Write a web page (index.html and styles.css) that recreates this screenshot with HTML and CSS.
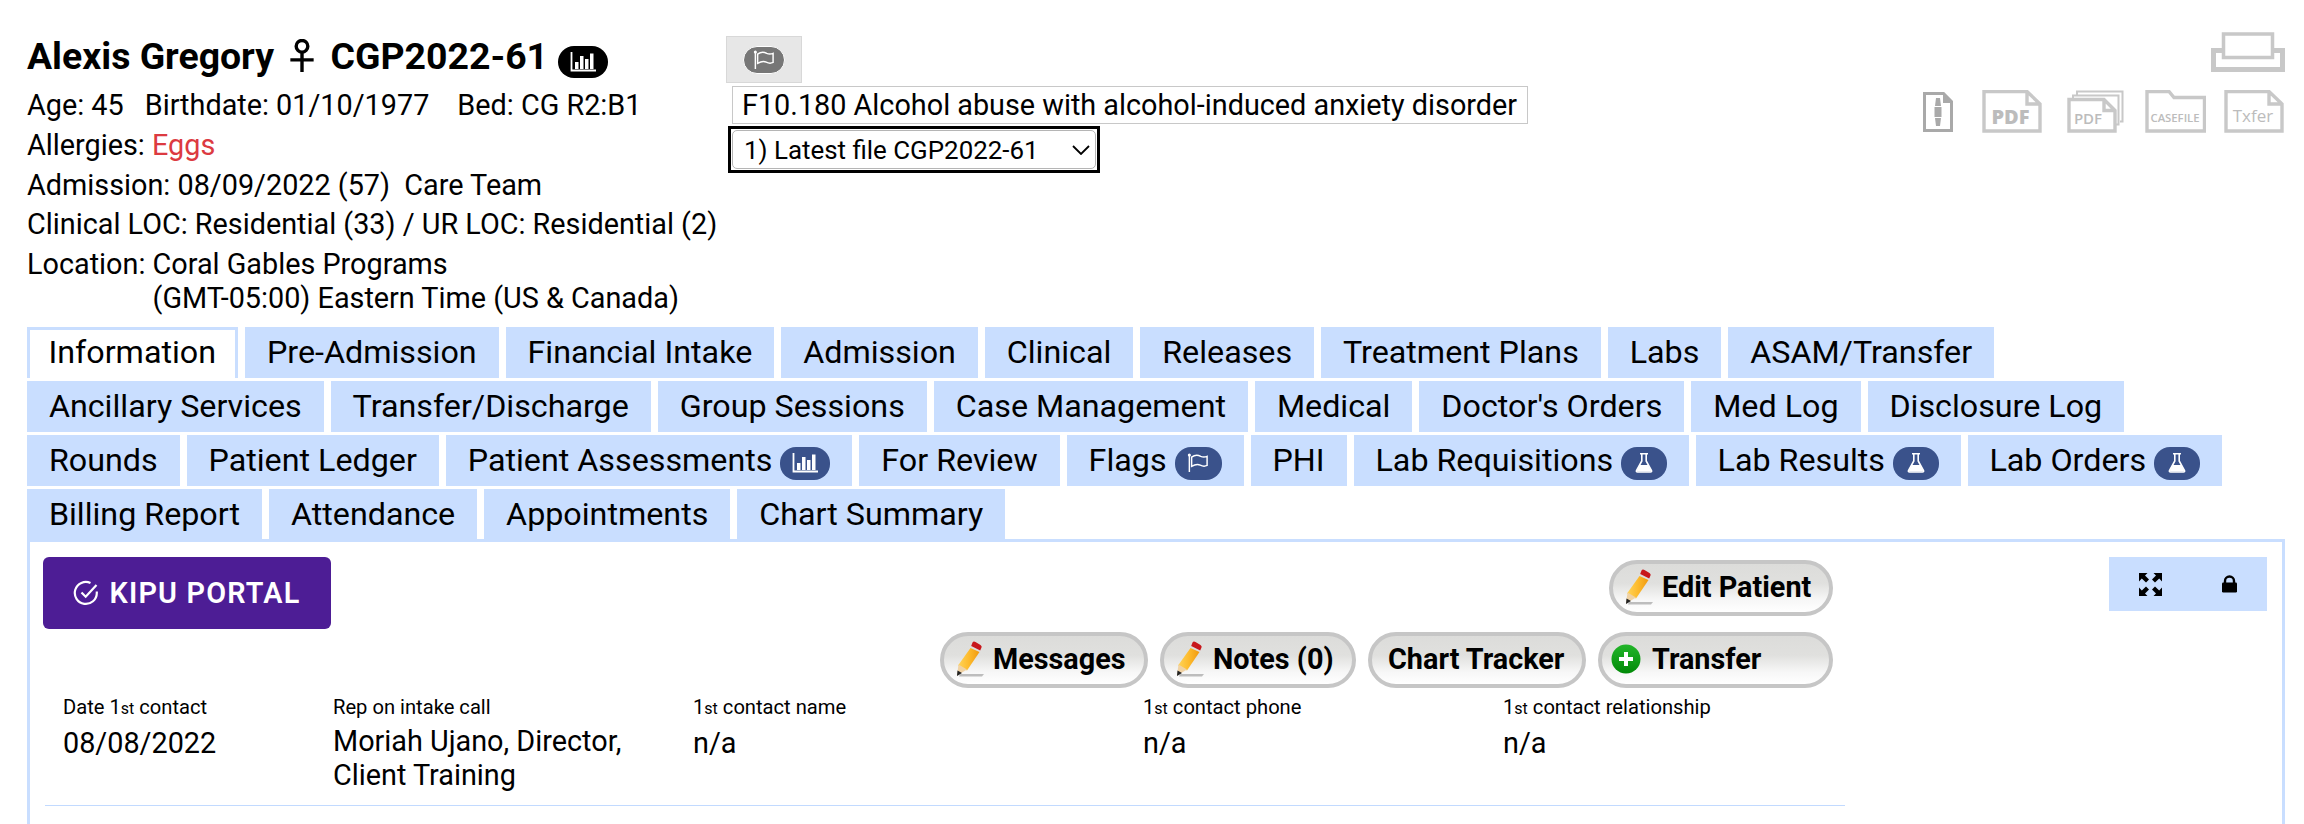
FILE: index.html
```html
<!DOCTYPE html>
<html lang="en">
<head>
<meta charset="utf-8">
<title>Patient chart</title>
<link rel="stylesheet" href="styles.css">
</head>
<body>
<svg class="defs" width="0" height="0">
  <defs>
    <symbol id="bars" viewBox="0 0 26 20"><path d="M1.500 0v18.500H26" fill="none" stroke="currentColor" stroke-width="1.800"/><path d="M5 10h3.500v7H5zM10 4h3.500v13H10zM15 7h3.500v10H15zM20 1.500h3.500v15.500H20z" fill="currentColor"/></symbol>
    <symbol id="flag" viewBox="0 0 24 22"><path d="M2.500 2v19M5 4.500c4-3 7-2.500 10-.8 2.500 1.200 4.500 1 7 0v10c-3 1.500-5 1-7.500-.3-3-1.400-5.500-1-9.500 1.200z" fill="none" stroke="currentColor" stroke-width="1.600"/><circle cx="2.500" cy="2.200" r="1.700" fill="currentColor"/></symbol>
    <symbol id="flask" viewBox="0 0 18 20"><path d="M5 .8h8M6.800 1v7L1.500 17.500q-.5 1.500 1 1.500h13q1.500 0 1-1.500L11.200 8V1" fill="none" stroke="currentColor" stroke-width="1.600"/><path d="M4.800 12h8.400l3.300 6.500h-15z" fill="currentColor"/></symbol>
    <linearGradient id="wood" x1="0" x2="1"><stop offset="0" stop-color="#ffd45a"/><stop offset=".5" stop-color="#fdbb2d"/><stop offset="1" stop-color="#f09a10"/></linearGradient>
    <linearGradient id="green" x2="0" y2="1"><stop offset="0" stop-color="#22b52a"/><stop offset="1" stop-color="#028a08"/></linearGradient>
    <symbol id="pencil" viewBox="0 0 30 36"><path d="M5 33h24l-2 2.500H4z" fill="#bdbdbd"/><path d="M15.500 7l9 4L12 29.500l-9-5z" fill="url(#wood)"/><path d="M3.500 23.500l8.500 5L2 34.500z" fill="#f0d2a4"/><path d="M2.500 29.500l4.500 2.500-5 3z" fill="#222"/><path d="M16 6l8.500 4.500 1-2L17 4z" fill="#ddd"/><path d="M17.500 1.500q1-1.500 3-.5l5 3q1.700 1 1 2.500l-1.300 3-9-4.500z" fill="#c8171c"/></symbol>
  </defs>
</svg>
<header class="head">
  <div class="patient">
    <h1 class="name">Alexis Gregory <svg class="female" viewBox="0 0 24 34"><circle cx="12" cy="7.500" r="6" /><path d="M12 13.500V34M0 21.500h24"/></svg> CGP2022-61 <span class="pill dark"><svg class="i-bars"><use href="#bars"/></svg></span></h1>
    <p class="line"><span>Age: 45</span><span class="birth">Birthdate: 01/10/1977</span><span class="bed">Bed: CG R2:B1</span></p>
    <p class="line">Allergies: <span class="red">Eggs</span></p>
    <p class="line">Admission: 08/09/2022 (57)&nbsp; Care Team</p>
    <p class="line">Clinical LOC: Residential (33) / UR LOC: Residential (2)</p>
    <p class="line loc"><span>Location:&nbsp;</span><span>Coral Gables Programs<br>(GMT-05:00) Eastern Time (US &amp; Canada)</span></p>
  </div>
  <div class="summary">
    <div class="flagbox"><span class="pill grey"><svg class="i-flag"><use href="#flag"/></svg></span></div>
    <div class="diagnosis">F10.180 Alcohol abuse with alcohol-induced anxiety disorder</div>
    <div class="picker"><div class="picker-in"><span>1) Latest file CGP2022-61</span><svg class="chev" viewBox="0 0 18 10"><path d="M1 1l8 8 8-8"/></svg></div></div>
  </div>
  <div class="tools">
    <svg class="printer" viewBox="0 0 74 40"><path d="M0 16h11v5H5v14h64V21h-6v-5h11v24H0z" fill="#c8c8c8"/><path d="M12.500 2h49v23.500h-49z" fill="#fff" stroke="#c8c8c8" stroke-width="3.500"/></svg>
    <div class="files">
      <svg width="30" height="40" viewBox="0 0 30 40"><path d="M1.500 1.500h19l8 8v29h-27z" fill="none" stroke="#a9a9a9" stroke-width="3"/><path d="M20 1v10h9z" fill="#a9a9a9"/><path d="M13 6h4l1 8h-6zM11.500 15h7v10h-7zM12 26h6l-1 8h-4z" fill="#a9a9a9"/></svg>
      <svg width="60" height="43" viewBox="0 0 60 43"><path d="M2 1.500h43L58 14v27H2zM45 2v12h12" class="doc"/><text x="28.500" y="34" class="t-pdf">PDF</text></svg>
      <svg width="57" height="43" viewBox="0 0 57 43"><path d="M10 5V1.500h45.500v30H53M6 9V5.500h45.500v29H49" class="doc thin"/><path d="M2 9.500h35l11 11v20.500H2zM37 10v10.500h10" class="doc"/><text x="21" y="34" class="t-small">PDF</text></svg>
      <svg width="61" height="43" viewBox="0 0 61 43"><path d="M2 1.500h22l5 6h30.500V41H2z" class="doc"/><text x="30" y="32" class="t-case">CASEFILE</text></svg>
      <svg width="60" height="43" viewBox="0 0 60 43"><path d="M2 1.500h43L58 14v27H2zM45 2v12h12" class="doc"/><text x="29" y="32" class="t-tx">Txfer</text></svg>
    </div>
  </div>
</header>
<nav class="tabs">
  <div class="row"><a class="tab on">Information</a><a class="tab">Pre-Admission</a><a class="tab">Financial Intake</a><a class="tab">Admission</a><a class="tab">Clinical</a><a class="tab">Releases</a><a class="tab">Treatment Plans</a><a class="tab">Labs</a><a class="tab">ASAM/Transfer</a></div>
  <div class="row"><a class="tab">Ancillary Services</a><a class="tab">Transfer/Discharge</a><a class="tab">Group Sessions</a><a class="tab">Case Management</a><a class="tab">Medical</a><a class="tab">Doctor's Orders</a><a class="tab">Med Log</a><a class="tab">Disclosure Log</a></div>
  <div class="row"><a class="tab">Rounds</a><a class="tab">Patient Ledger</a><a class="tab">Patient Assessments <span class="pill blue w50"><svg class="i-bars"><use href="#bars"/></svg></span></a><a class="tab">For Review</a><a class="tab">Flags <span class="pill blue w47"><svg class="i-flag"><use href="#flag"/></svg></span></a><a class="tab">PHI</a><a class="tab">Lab Requisitions <span class="pill blue w45"><svg class="i-flask"><use href="#flask"/></svg></span></a><a class="tab">Lab Results <span class="pill blue w45"><svg class="i-flask"><use href="#flask"/></svg></span></a><a class="tab">Lab Orders <span class="pill blue w45"><svg class="i-flask"><use href="#flask"/></svg></span></a></div>
  <div class="row"><a class="tab">Billing Report</a><a class="tab">Attendance</a><a class="tab">Appointments</a><a class="tab">Chart Summary</a></div>
</nav>
<main class="panel">
  <div class="main">
    <div class="actions">
      <button class="portal"><svg class="check" viewBox="0 0 26 26"><path d="M23.800 11.500v1.400A11 11 0 1 1 17.500 3M8.500 12.500l4.200 4.200L23.500 5"/></svg>KIPU PORTAL</button>
      <div class="buttons">
        <div class="brow"><button class="btn edit"><svg class="pen"><use href="#pencil"/></svg>Edit Patient</button></div>
        <div class="brow"><button class="btn msg"><svg class="pen"><use href="#pencil"/></svg>Messages</button><button class="btn notes"><svg class="pen"><use href="#pencil"/></svg>Notes (0)</button><button class="btn chart">Chart Tracker</button><button class="btn transfer"><svg class="plus" viewBox="0 0 30 30"><circle cx="15" cy="15" r="14.500" fill="url(#green)"/><path d="M15 8v14M8 15h14" stroke="#fff" stroke-width="4"/></svg>Transfer</button></div>
      </div>
    </div>
    <dl class="facts">
      <div><dt>Date 1<small>st</small> contact</dt><dd>08/08/2022</dd></div>
      <div><dt>Rep on intake call</dt><dd>Moriah Ujano, Director, Client Training</dd></div>
      <div><dt>1<small>st</small> contact name</dt><dd>n/a</dd></div>
      <div><dt>1<small>st</small> contact phone</dt><dd>n/a</dd></div>
      <div><dt>1<small>st</small> contact relationship</dt><dd>n/a</dd></div>
    </dl>
  </div>
  <div class="side">
    <svg class="expand" viewBox="0 0 23 23"><g id="arrow"><path d="M0 0h8.500L6 2.500 10 6.500 7 9.500 2.800 5.600 0 8.500z"/></g><use href="#arrow" transform="translate(23 0) scale(-1 1)"/><use href="#arrow" transform="translate(0 23) scale(1 -1)"/><use href="#arrow" transform="translate(23 23) scale(-1 -1)"/></svg>
    <svg class="lock" viewBox="0 0 15 18"><rect y="7.500" width="15" height="10" rx="1.200"/><path d="M3 8.500V6a4.500 4.500 0 0 1 9 0v2.500" fill="none" stroke="#000" stroke-width="2.400"/></svg>
  </div>
</main>
</body>
</html>
```

FILE: styles.css
```css
* { box-sizing: border-box; }
body { margin: 0; width: 2304px; height: 824px; overflow: hidden; background: #fff; color: #000; font: 28.8px/34px Roboto, sans-serif; display: flex; flex-direction: column; }
h1, p, dl, dd { margin: 0; }
svg { flex: none; }
.defs { position: absolute; }
.head { height: 327px; padding: 32px 19px 0 27px; display: flex; flex: none; }
.patient { width: 699px; white-space: nowrap; }
.name { font-size: 37.400px; line-height: 48px; height: 53px; font-weight: 700; }
.female { width: 24px; height: 33px; margin: 0 7px 0 7px; vertical-align: -3px; fill: none; stroke: #000; stroke-width: 3.500px; }
.line { height: 39.800px; line-height: 40.500px; display: block; }
.line .birth { margin-left: 21px; }
.line .bed { margin-left: 28px; }
.line.loc { display: flex; line-height: 34px; padding-top: 3px; height: auto; }
.red { color: #dc3a41; }
.pill { display: inline-flex; align-items: center; justify-content: center; height: 33px; border-radius: 16px; color: #fff; }
.dark { width: 50px; height: 32px; background: #000; margin-left: 1px; vertical-align: -3px; }
.grey { width: 42px; height: 28px; background: #777; border: 1px solid #fff; border-radius: 14px; }
.blue { background: #3a528b; }
.w50 { width: 50px; }
.w47 { width: 47px; }
.w45 { width: 45.500px; }
.i-bars { width: 26px; height: 20px; }
.i-flag { width: 22px; height: 20px; }
.i-flask { width: 18px; height: 20px; }
.summary { width: 820px; display: flex; flex-direction: column; align-items: flex-start; padding-top: 4px; }
.flagbox { width: 76px; height: 47px; background: #e7e7e7; border: 1px solid #d8d8d8; display: flex; align-items: center; justify-content: center; }
.diagnosis { margin: 3px 0 0 6px; width: 796px; height: 38px; border: 1px solid #c8c8c8; padding-left: 9px; line-height: 37px; white-space: nowrap; }
.picker { margin: 2px 0 0 2px; width: 372px; height: 47px; border: 3px solid #000; padding: 1px; }
.picker-in { height: 39px; border: 1px solid #b5b5b5; border-radius: 5px; display: flex; align-items: center; justify-content: space-between; padding: 0 5px 0 11px; font-size: 25.900px; }
.chev { width: 18px; height: 10px; fill: none; stroke: #000; stroke-width: 1.800px; }
.tools { flex: 1; display: flex; flex-direction: column; align-items: flex-end; }
.printer { width: 74px; height: 40px; }
.files { display: flex; align-items: center; margin: 18px 1px 0 0; }
.files svg:nth-child(1) { margin-right: 29px; }
.files svg:nth-child(2) { margin-right: 25px; }
.files svg:nth-child(3) { margin-right: 21px; }
.files svg:nth-child(4) { margin-right: 18px; }
.doc { fill: none; stroke: #c8c8c8; stroke-width: 3.400px; }
.thin { stroke-width: 2px; }
.files text { fill: #bcbcbc; text-anchor: middle; font-family: "Open Sans", sans-serif; }
.files .t-pdf { font-size: 20px; font-weight: 800; }
.files .t-small { font-size: 15px; font-weight: 600; }
.files .t-case { font-size: 11.300px; font-weight: 600; }
.files .t-tx { font-size: 17px; }
.tabs { padding-left: 27px; flex: none; height: 212px; display: flex; flex-direction: column; gap: 3px; }
.row { display: flex; gap: 7px; height: 51px; }
.tab { height: 51px; padding: 0 22px 0 21.900px; background: #c9deff; font-size: 32.250px; line-height: 50px; white-space: nowrap; }
.tab.on { background: #fff; border: 3px solid #c9deff; border-bottom: 0; padding: 0 19px 0 18.500px; line-height: 44px; }
.tab .pill { vertical-align: -2px; }
.panel { margin: 0 19px 0 27px; flex: 1; border: 3px solid #c9deff; border-bottom: 0; display: flex; justify-content: space-between; align-items: flex-start; padding: 15px 15px 0 13px; }
.main { width: 1802px; }
.actions { display: flex; justify-content: space-between; height: 137px; padding-right: 12px; }
.portal { width: 288px; height: 72px; border: 0; border-radius: 6px; background: #4d1d95; color: #fff; font: 600 28.8px/34px Roboto, sans-serif; letter-spacing: 1.200px; display: flex; align-items: center; justify-content: center; gap: 10px; padding: 0; }
.check { width: 26px; height: 26px; fill: none; stroke: #fff; stroke-width: 2.200px; }
.buttons { padding-top: 3px; display: flex; flex-direction: column; gap: 16px; }
.brow { display: flex; gap: 12px; justify-content: flex-end; }
.btn { height: 56px; border: 4px solid #c6c6c6; border-radius: 28px; background: linear-gradient(#dcdcda, #e0e0de 40%, #f7f7f7 75%, #fff); font: 700 28.8px/34px Roboto, sans-serif; color: #000; display: flex; align-items: center; padding: 0 0 3px 11px; white-space: nowrap; }
.pen { width: 30px; height: 36px; margin-right: 8px; }
.plus { width: 30px; height: 30px; margin: 0 11px 0 -2px; }
.edit { width: 224px; }
.msg { width: 208px; }
.notes { width: 196px; }
.chart { width: 218px; padding-left: 16px; }
.transfer { width: 235px; }
.facts { display: grid; grid-template-columns: 270px 360px 450px 360px 1fr; padding-left: 18px; height: 112px; border-bottom: 1px solid #c2daff; margin-left: 2px; }
.facts dt { font-size: 20.160px; line-height: 26px; }
.facts small { font-size: 16px; }
.facts dd { line-height: 34px; margin-top: 3.500px; max-width: 300px; }
.side { width: 158px; height: 54px; background: #c9deff; display: flex; align-items: center; padding: 0 30px; justify-content: space-between; }
.expand { width: 23px; height: 23px; }
.lock { width: 15px; height: 18px; }
```
